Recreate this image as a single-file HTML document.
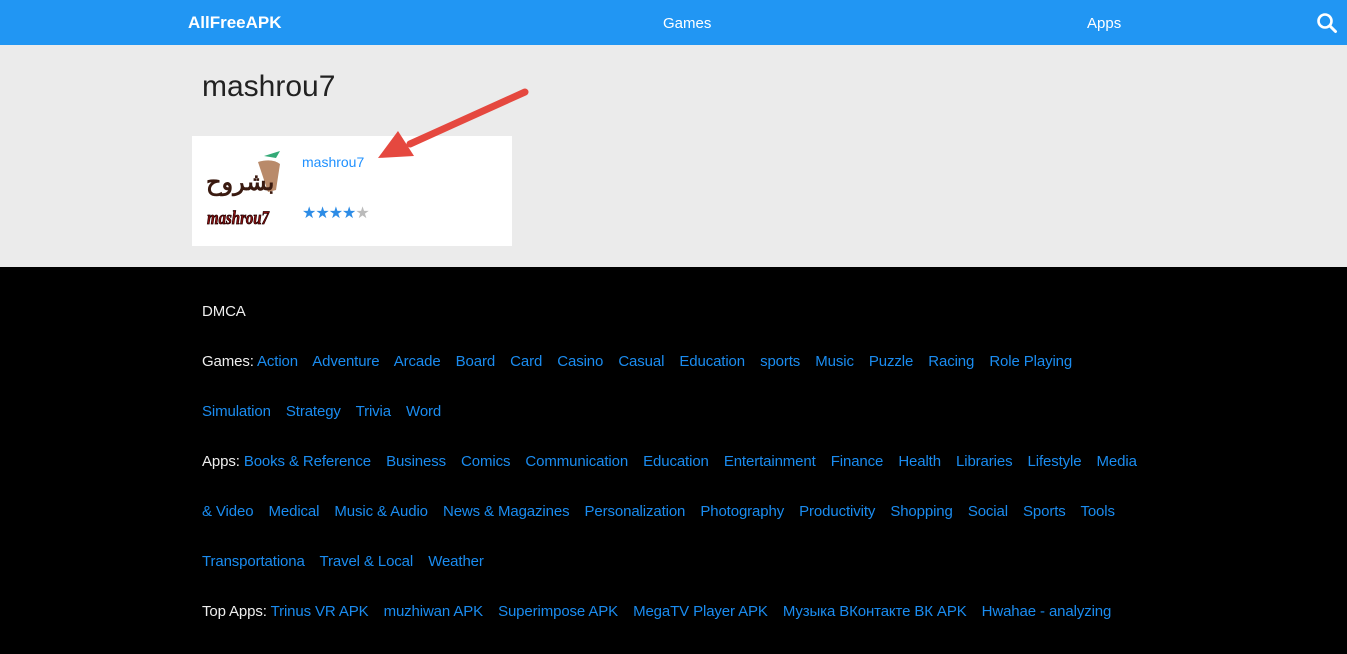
<!DOCTYPE html>
<html><head><meta charset="utf-8"><style>
body{margin:0;width:1347px;height:654px;overflow:hidden;background:#ebebeb;font-family:"Liberation Sans",Arial,sans-serif;position:relative}
.nav{position:absolute;left:0;top:0;width:1347px;height:45px;background:#2196f3;color:#fff}
.nav span{position:absolute;top:15px;font-size:15px}
.logo{left:188px;font-weight:bold;font-size:17px!important;top:13px!important}
h1{position:absolute;left:202px;top:70px;margin:0;font-weight:normal;font-size:30px;color:#222}
.card{position:absolute;left:192px;top:136px;width:320px;height:110px;background:#fff}
.card a{position:absolute;left:110px;top:18px;color:#1e90ff;font-size:14px;text-decoration:none}
.stars{position:absolute;left:110px;top:67px;font-size:16px;color:#2d8ce6;letter-spacing:-1px}
.foot{position:absolute;left:0;top:267px;width:1347px;height:387px;background:#000}
.l{position:absolute;left:202px;font-size:15px;color:#eee;white-space:nowrap;letter-spacing:-0.12px}
.l a{color:#1a8cf0;text-decoration:none;margin-right:11px}
</style></head><body>
<div class="nav"><span class="logo">AllFreeAPK</span><span style="left:663px">Games</span><span style="left:1087px">Apps</span>
<svg style="position:absolute;left:1316px;top:12px" width="22" height="22" viewBox="0 0 22 22"><circle cx="9" cy="9" r="6.5" fill="none" stroke="#fff" stroke-width="2.6"/><line x1="14" y1="14" x2="19.5" y2="19.5" stroke="#fff" stroke-width="3" stroke-linecap="round"/></svg></div>
<h1>mashrou7</h1>
<div class="card">
<svg style="position:absolute;left:12px;top:14px" width="80" height="80" viewBox="0 0 80 80">
<path d="M60 6 L76 1 L72 8 Z" fill="#3a7"/><path d="M54 12 Q68 8 76 14 L72 40 L64 42 Z" fill="#b98a6a"/>
<text x="2" y="40" font-size="24" fill="#3a1a10" font-family="Noto Sans CJK SC,serif" font-weight="bold">بشروح</text>
<text x="3" y="74" font-size="19" fill="#8a1010" font-family="Liberation Serif,serif" font-weight="bold" font-style="italic" stroke="#200" stroke-width="0.8" textLength="62" lengthAdjust="spacingAndGlyphs">mashrou7</text>
</svg>
<a>mashrou7</a>
<div class="stars">★★★★<span style="color:#bbb">★</span></div>
</div>
<svg style="position:absolute;left:370px;top:84px" width="165" height="85" viewBox="0 0 165 85"><line x1="155" y1="8" x2="40" y2="60" stroke="#e5483f" stroke-width="7" stroke-linecap="round"/><polygon points="8,74 28,47 44,72" fill="#e5483f"/></svg>
<div class="foot"></div>
<div class="l" style="top:303px">DMCA</div>
<div class="l" style="top:353px">Games: <a>Action</a> <a>Adventure</a> <a>Arcade</a> <a>Board</a> <a>Card</a> <a>Casino</a> <a>Casual</a> <a>Education</a> <a>sports</a> <a>Music</a> <a>Puzzle</a> <a>Racing</a> <a>Role Playing</a></div>
<div class="l" style="top:403px"><a>Simulation</a> <a>Strategy</a> <a>Trivia</a> <a>Word</a></div>
<div class="l" style="top:453px">Apps: <a>Books &amp; Reference</a> <a>Business</a> <a>Comics</a> <a>Communication</a> <a>Education</a> <a>Entertainment</a> <a>Finance</a> <a>Health</a> <a>Libraries</a> <a>Lifestyle</a> <a>Media</a></div>
<div class="l" style="top:503px"><a>&amp; Video</a> <a>Medical</a> <a>Music &amp; Audio</a> <a>News &amp; Magazines</a> <a>Personalization</a> <a>Photography</a> <a>Productivity</a> <a>Shopping</a> <a>Social</a> <a>Sports</a> <a>Tools</a></div>
<div class="l" style="top:553px"><a>Transportationa</a> <a>Travel &amp; Local</a> <a>Weather</a></div>
<div class="l" style="top:603px">Top Apps: <a>Trinus VR APK</a> <a>muzhiwan APK</a> <a>Superimpose APK</a> <a>MegaTV Player APK</a> <a>Музыка ВКонтакте ВК APK</a> <a>Hwahae - analyzing</a></div>
</body></html>
